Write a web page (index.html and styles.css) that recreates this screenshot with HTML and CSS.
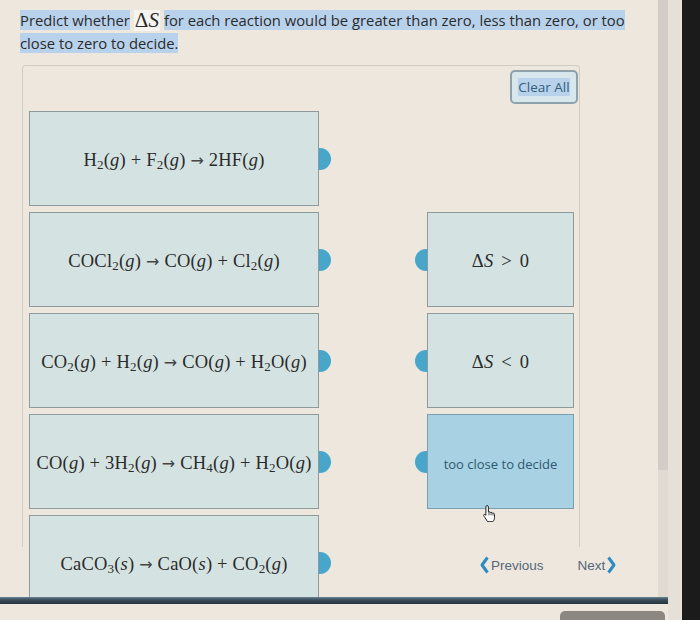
FILE: index.html
```html
<!DOCTYPE html>
<html lang="en">
  <head>
    <meta charset="UTF-8" />
    <title>Entropy change</title>
    <link rel="stylesheet" href="styles.css">
  </head>
  <body>
    <div class="screen">
      <div class="content">
        <div class="main">
          <p class="prompt">
            <span class="sel">Predict whether</span> <span class="math big">Δ<i>S</i></span> <span class="sel">for each reaction would be greater than zero, less than zero, or too</span>
            <span class="sel">close to zero to decide.</span>
          </p>

          <div class="workspace">
            <div class="toolbar">
              <button class="clear-btn"><span class="sel">Clear All</span></button>
            </div>

            <div class="board">
              <div class="sources">
                <div class="card source">
                  <span class="math">H<sub>2</sub>(<i>g</i>) + F<sub>2</sub>(<i>g</i>) <span class="arr">→</span> 2HF(<i>g</i>)</span>
                </div>
                <div class="card source">
                  <span class="math">COCl<sub>2</sub>(<i>g</i>) <span class="arr">→</span> CO(<i>g</i>) + Cl<sub>2</sub>(<i>g</i>)</span>
                </div>
                <div class="card source">
                  <span class="math">CO<sub>2</sub>(<i>g</i>) + H<sub>2</sub>(<i>g</i>) <span class="arr">→</span> CO(<i>g</i>) + H<sub>2</sub>O(<i>g</i>)</span>
                </div>
                <div class="card source">
                  <span class="math">CO(<i>g</i>) + 3H<sub>2</sub>(<i>g</i>) <span class="arr">→</span> CH<sub>4</sub>(<i>g</i>) + H<sub>2</sub>O(<i>g</i>)</span>
                </div>
                <div class="card source">
                  <span class="math">CaCO<sub>3</sub>(<i>s</i>) <span class="arr">→</span> CaO(<i>s</i>) + CO<sub>2</sub>(<i>g</i>)</span>
                </div>
              </div>

              <div class="targets">
                <div class="card target">
                  <span class="math">Δ<i>S</i> &gt; 0</span>
                </div>
                <div class="card target">
                  <span class="math">Δ<i>S</i> &lt; 0</span>
                </div>
                <div class="card target active">
                  <span class="label">too close to decide</span>
                  <svg class="cursor" width="14" height="18" viewBox="0 0 14 18">
                    <path d="M4 1.5c.8 0 1.4.6 1.4 1.4v5.2l.6-.2c.7-.2 1.3.1 1.6.6l.5-.1c.7-.1 1.3.2 1.5.8l.4-.1c.8-.1 1.5.5 1.5 1.3v3.3c0 1.6-.6 2.9-1.7 4H4.6L2 13.6c-.5-.7-1.2-1.6-1.3-2.3-.1-.7.6-1.1 1.2-.8l1 .8V2.9c0-.8.4-1.4 1.1-1.4z" fill="#fff" stroke="#222" stroke-width="1"/>
                    <path d="M6 8.3v3M8.1 8.7v2.6M10 9.3v2.2" stroke="#222" stroke-width=".8" fill="none"/>
                  </svg>
                </div>
              </div>
            </div>
          </div>

          <div class="pager">
            <a class="pager-link">
              <svg width="9" height="18" viewBox="0 0 9 18"><path d="M7.5 1.5 2 9l5.5 7.5" fill="none" stroke="#2b8cc4" stroke-width="3" stroke-linejoin="round"/></svg>
              Previous
            </a>
            <a class="pager-link">
              Next
              <svg width="9" height="18" viewBox="0 0 9 18"><path d="M1.5 1.5 7 9l-5.5 7.5" fill="none" stroke="#2b8cc4" stroke-width="3" stroke-linejoin="round"/></svg>
            </a>
          </div>
        </div>

        <div class="scrollbar"><div class="thumb"></div></div>
      </div>

      <div class="bottom-bar"></div>
      <div class="footer">
        <div class="footer-btn"></div>
      </div>
    </div>
    <div class="edge"></div>
    <div class="bezel"></div>
  </body>
</html>
```

FILE: styles.css
```css
* {
  margin: 0;
  padding: 0;
  box-sizing: border-box;
}

body {
  display: flex;
  height: 620px;
  overflow: hidden;
  background: #eee7dd;
  font-family: "Open Sans", sans-serif;
  color: #2b2b2b;
}

.screen {
  width: 668px;
  display: flex;
  flex-direction: column;
}

.content {
  display: flex;
  height: 597px;
  overflow: hidden;
}

.main {
  width: 658px;
  padding: 9px 0 0 20px;
}

.prompt {
  font-size: 14.8px;
  line-height: 23px;
  width: 630px;
}

.sel {
  background: #b9d2ec;
}

.math {
  font-family: "Liberation Serif", serif;
  font-size: 18.5px;
  letter-spacing: 0.2px;
  white-space: nowrap;
}

.math.big {
  display: inline-block;
  height: 21px;
  font-size: 21px;
  line-height: 21px;
  padding: 0 1px;
  background: #f7f4ef;
  vertical-align: top;
  margin-top: 1px;
}

.math sub {
  font-size: 13px;
  vertical-align: -3px;
  line-height: 0;
}

.arr {
  font-family: "DejaVu Sans", sans-serif;
  font-size: 16px;
  color: #444;
}

/* drag and drop area */
.workspace {
  margin: 10px 0 0 2px;
  width: 558px;
  height: 482px;
  border: 1px solid #d2ccc3;
  border-bottom: none;
  border-radius: 4px 4px 0 0;
}

.toolbar {
  display: flex;
  justify-content: flex-end;
  padding: 4px 1px 0 0;
}

.clear-btn {
  width: 68px;
  height: 34px;
  border: 2px solid #8ea2ae;
  border-radius: 5px;
  background: #d8e7ec;
  font-family: "Open Sans", sans-serif;
  font-size: 13.5px;
  color: #2f5f7a;
}

.board {
  display: flex;
  margin-top: 7px;
  padding-left: 6px;
}

.sources {
  width: 290px;
  display: flex;
  flex-direction: column;
  gap: 6px;
}

.targets {
  width: 147px;
  margin: 101px 0 0 108px;
  display: flex;
  flex-direction: column;
  gap: 6px;
}

.card {
  position: relative;
  height: 95px;
  display: flex;
  align-items: center;
  justify-content: center;
  padding-top: 4px;
  background: #d4e3e2;
  border: 1.5px solid #8d9b9c;
}

.card::after {
  content: "";
  position: absolute;
  top: 50%;
  width: 12px;
  height: 22px;
  margin-top: -11px;
  background: #48a6cb;
}

.source::after {
  right: -13px;
  border-radius: 0 11px 11px 0;
}

.target::after {
  left: -13px;
  border-radius: 11px 0 0 11px;
}

.target .math {
  font-size: 18.5px;
  word-spacing: 3px;
}

.target.active {
  background: #a8d1e3;
  border-color: #7c9fae;
}

.label {
  font-size: 13px;
  color: #2d5a70;
}

.cursor {
  position: absolute;
  left: 55px;
  bottom: -14px;
}

.pager {
  display: flex;
  gap: 34px;
  margin: 7px 0 0 460px;
  height: 22px;
  align-items: center;
}

.pager-link {
  display: flex;
  align-items: center;
  gap: 2px;
  font-family: "Liberation Sans", sans-serif;
  font-size: 13.5px;
  color: #55677a;
}

.scrollbar {
  width: 10px;
  background: #e0dad3;
}

.thumb {
  height: 470px;
  background: #d3cdc7;
}

.bottom-bar {
  height: 7px;
  background: linear-gradient(#6a8494, #3b4d5a 40%, #26333d);
}

.footer {
  flex: 1;
  display: flex;
  justify-content: flex-end;
  align-items: flex-end;
  padding-right: 3px;
}

.footer-btn {
  width: 105px;
  height: 9px;
  background: #8d8781;
  border-radius: 5px 5px 0 0;
}

.edge {
  width: 14px;
  background: #e6e0d8;
}

.bezel {
  flex: 1;
  background: #1b1b1c;
}
```
